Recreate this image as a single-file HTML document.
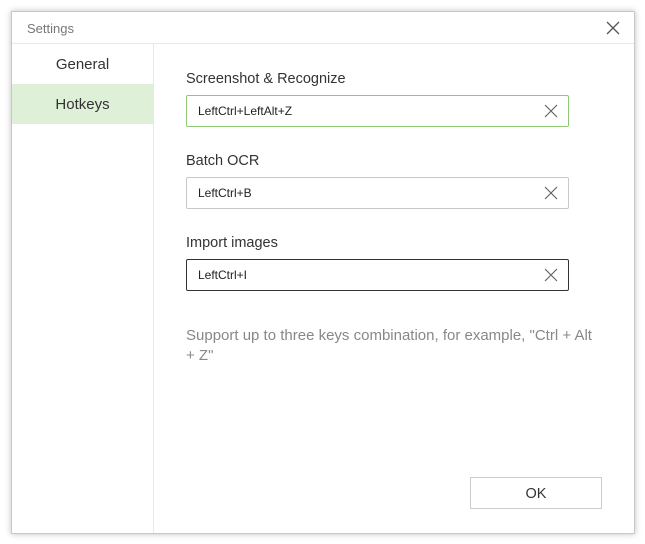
<!DOCTYPE html>
<html><head><style>
body{margin:0;width:645px;height:544px;background:#fff;font-family:"Liberation Sans",sans-serif;position:relative;overflow:hidden}
.win{position:absolute;left:11px;top:11px;width:622px;height:521px;border:1px solid #c8c8c8;box-shadow:0 0 6px rgba(0,0,0,.25);background:#fff}
.title{position:absolute;left:15px;top:9px;font-size:13px;color:#777}
.hr{position:absolute;left:0;top:31px;width:622px;height:1px;background:#e8e8e8}
.side{position:absolute;left:141px;top:32px;width:1px;height:489px;background:#e8e8e8}
.nav{position:absolute;left:0;width:141px;height:40px;line-height:42px;text-align:center;font-size:15px;color:#333}
.lbl{position:absolute;left:174px;font-size:14.5px;color:#333}
.inp{position:absolute;left:174px;width:381px;height:30px;border:1px solid #c8c8c8;border-radius:2px;box-sizing:content-box}
.inp span{position:absolute;left:11px;top:8px;font-size:12px;color:#222}
.inp svg{position:absolute;right:10px;top:8px}
.help{position:absolute;left:174px;top:314px;width:410px;font-size:15px;line-height:20px;color:#888}
.ok{position:absolute;left:458px;top:465px;width:130px;height:30px;border:1px solid #ccc;text-align:center;line-height:32px;font-size:14.5px;color:#333}
</style></head><body>
<div class="win">
<div class="title">Settings</div>
<svg style="position:absolute;left:594px;top:9px" width="14" height="14"><path d="M1 1L13 13M13 1L1 13" stroke="#555" stroke-width="1.3"/></svg>
<div class="hr"></div><div class="side"></div>
<div class="nav" style="top:32px">General</div>
<div class="nav" style="top:72px;background:#dff0d8">Hotkeys</div>
<div class="lbl" style="top:59px">Screenshot &amp; Recognize</div>
<div class="inp" style="top:83px;border-color:#8fc878"><span>LeftCtrl+LeftAlt+Z</span><svg width="14" height="14"><path d="M1 1L13 13M13 1L1 13" stroke="#666" stroke-width="1.2"/></svg></div>
<div class="lbl" style="top:141px">Batch OCR</div>
<div class="inp" style="top:165px"><span>LeftCtrl+B</span><svg width="14" height="14"><path d="M1 1L13 13M13 1L1 13" stroke="#666" stroke-width="1.2"/></svg></div>
<div class="lbl" style="top:223px">Import images</div>
<div class="inp" style="top:247px;border-color:#333"><span>LeftCtrl+I</span><svg width="14" height="14"><path d="M1 1L13 13M13 1L1 13" stroke="#666" stroke-width="1.2"/></svg></div>
<div class="help">Support up to three keys combination, for example, "Ctrl + Alt + Z"</div>
<div class="ok">OK</div>
</div>
</body></html>
